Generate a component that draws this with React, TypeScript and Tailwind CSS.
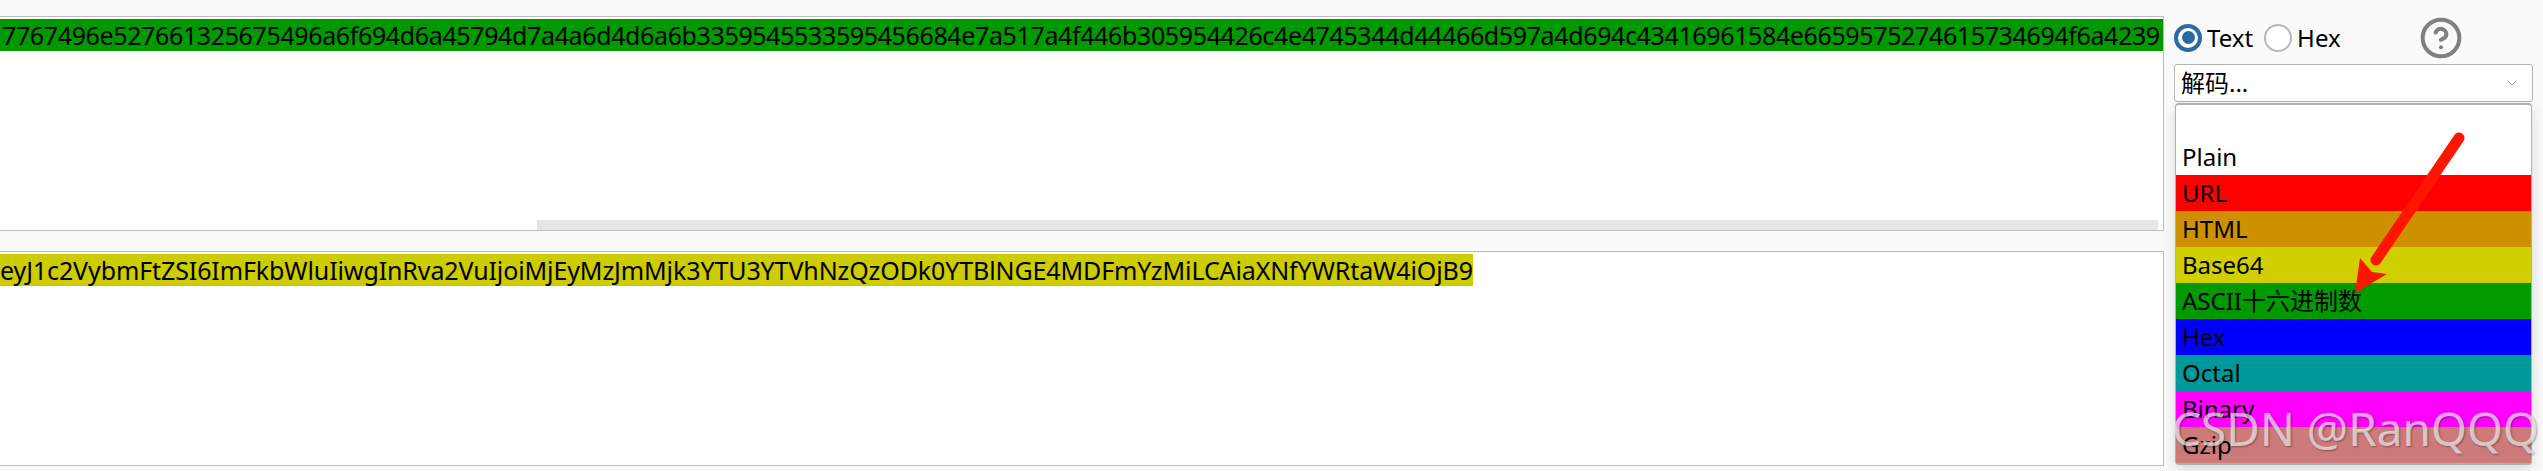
import { ChevronDown, CircleHelp } from 'lucide-react';

const hexText =
  '7767496e527661325675496a6f694d6a45794d7a4a6d4d6a6b3359545533595456684e7a517a4f446b305954426c4e4745344d44466d597a4d694c43416961584e6659575274615734694f6a4239';
const base64Text =
  'eyJ1c2VybmFtZSI6ImFkbWluIiwgInRva2VuIjoiMjEyMzJmMjk3YTU3YTVhNzQzODk0YTBlNGE4MDFmYzMiLCAiaXNfYWRtaW4iOjB9';

const decoders = [
  { label: 'Plain', color: 'bg-white' },
  { label: 'URL', color: 'bg-[#ff0000]' },
  { label: 'HTML', color: 'bg-[#cc9000]' },
  { label: 'Base64', color: 'bg-[#d0d000]' },
  { label: 'ASCII十六进制数', color: 'bg-[#009900]' },
  { label: 'Hex', color: 'bg-[#0000ff]' },
  { label: 'Octal', color: 'bg-[#009999]' },
  { label: 'Binary', color: 'bg-[#ff00ff]' },
  { label: 'Gzip', color: 'bg-[#cc7a7a]' },
];

function Radio({ label, checked }: { label: string; checked?: boolean }) {
  return (
    <div className="flex items-center gap-[5px]">
      {checked ? (
        <span className="flex h-[28px] w-[28px] items-center justify-center rounded-full border-[4px] border-[#2a6aa5] bg-white">
          <span className="h-[13px] w-[13px] rounded-full bg-[#2a6aa5]" />
        </span>
      ) : (
        <span className="h-[28px] w-[28px] rounded-full border-[2px] border-[#b8b8b8] bg-white" />
      )}
      <span>{label}</span>
    </div>
  );
}

export default function App() {
  return (
    <div className="relative flex h-[471px] w-[2543px] overflow-hidden bg-[#fafafa] font-['Noto_Sans','Noto_Sans_CJK_SC',sans-serif] text-[24px] leading-[32px] text-black">
      {/* Text panes */}
      <div className="flex w-[2164px] flex-col gap-[20px] pt-[16px] text-[25px]">
        <div className="flex h-[215px] flex-col justify-between border-y border-r border-[#bdb9bd] bg-white pt-[2px]">
          <div className="h-[32px] whitespace-nowrap bg-[#009900] pl-[2px] tracking-[-0.37px]">{hexText}</div>
          <div className="ml-[537px] mr-[5px] h-[10px] bg-[#e5e5e5]" />
        </div>
        <div className="h-[215px] border-y border-r border-[#bdb9bd] bg-white pt-[2px]">
          <div className="inline-block h-[32px] whitespace-nowrap bg-[#cccc00] tracking-[-0.11px]">{base64Text}</div>
        </div>
      </div>

      {/* Decoder controls */}
      <div className="flex flex-1 flex-col pl-[10px] pr-[10px] pt-[18px]">
        <div className="flex h-[39px] items-center">
          <div className="flex items-center gap-[11px]">
            <Radio label="Text" checked />
            <Radio label="Hex" />
          </div>
          <CircleHelp className="ml-[78px] h-[44px] w-[44px] text-[#808080]" strokeWidth={2.2} />
        </div>
        <div className="mt-[7px] flex h-[38px] items-center justify-between rounded-[3px] border border-[#b4b4b4] bg-white pl-[6px] pr-[12px]">
          <span>解码...</span>
          <ChevronDown className="h-[16px] w-[16px] text-[#8a8a8a]" strokeWidth={1.25} />
        </div>
        <div className="mx-px mt-px rounded-[4px] border border-y-2 border-[#b0b0b0] bg-white shadow-[0_4px_14px_rgba(0,0,0,0.14)]">
          <div className="h-[34px]" />
          {decoders.map((d) => (
            <div key={d.label} className={`flex h-[36px] items-center pl-[6px] ${d.color}`}>
              {d.label}
            </div>
          ))}
        </div>
      </div>

      {/* Red annotation arrow */}
      <svg className="absolute left-0 top-0 h-[471px] w-[2543px]" viewBox="0 0 2543 471" fill="none">
        <path d="M2459 138 L2376 260" stroke="#ff1500" strokeWidth="11" strokeLinecap="round" />
        <path d="M2355 293 L2360 258 L2372 272 L2387 274 Z" fill="#ff1500" />
      </svg>

      {/* Watermark */}
      <div className="absolute left-[2172px] top-[397px] whitespace-nowrap text-[46px] leading-[62px] text-white/65 [text-shadow:1px_1px_2px_rgba(0,0,0,0.35)]">
        CSDN @RanQQQ
      </div>
    </div>
  );
}
